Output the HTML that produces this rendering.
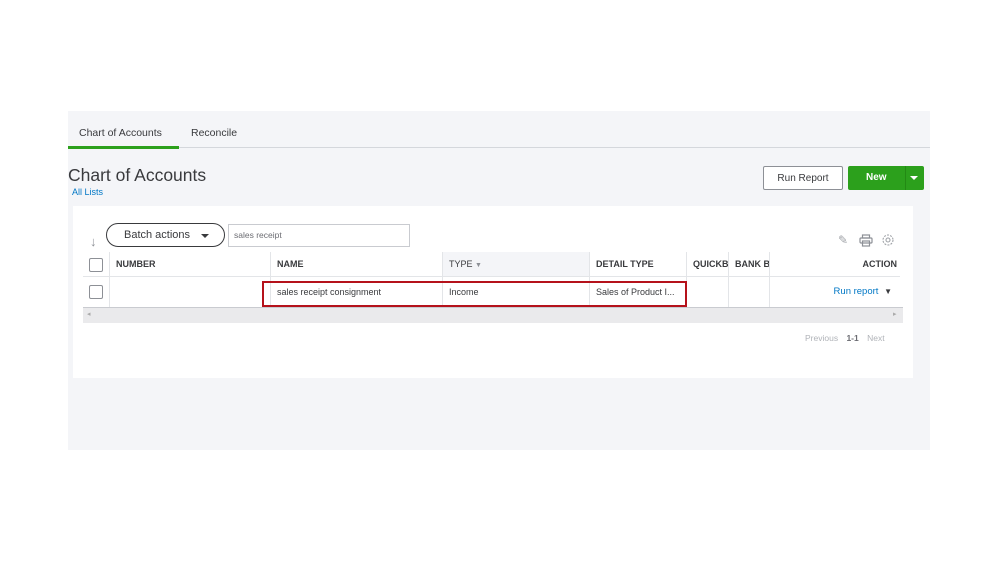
<!DOCTYPE html><html><head><style>
body{margin:0;width:999px;height:562px;background:#fff;position:relative;font-family:"Liberation Sans",sans-serif;overflow:hidden}
.a{position:absolute}
.th{position:absolute;top:252px;height:24px;line-height:24px;font-size:9px;font-weight:bold;color:#393a3d;padding-left:6px;box-sizing:border-box;border-left:1px solid #e3e5e8;white-space:nowrap;overflow:hidden}
.td{position:absolute;top:277px;height:30px;line-height:30px;font-size:9px;color:#393a3d;padding-left:6px;box-sizing:border-box;border-left:1px solid #e3e5e8;white-space:nowrap;overflow:hidden}
.cb{position:absolute;width:12px;height:12px;border:1px solid #8d9096;border-radius:2px;background:#fff}
</style></head><body>
<div class="a" style="left:68px;top:111px;width:862px;height:339px;background:#f4f5f8"></div>
<div class="a" style="left:68px;top:147px;width:862px;height:1px;background:#d4d7dc"></div>
<div class="a" style="left:68px;top:146px;width:111px;height:3px;background:#2ca01c"></div>
<div class="a" style="left:79px;top:127px;font-size:10.5px;color:#393a3d">Chart of Accounts</div>
<div class="a" style="left:191px;top:127px;font-size:10.5px;color:#393a3d">Reconcile</div>
<div class="a" style="left:68px;top:165px;font-size:17.5px;color:#393a3d">Chart of Accounts</div>
<div class="a" style="left:72px;top:187px;font-size:9px;color:#0077c5">All Lists</div>
<div class="a" style="left:763px;top:166px;width:78px;height:22px;border:1px solid #8d9096;border-radius:2px;background:#fff;font-size:10px;text-align:center;line-height:24px;color:#393a3d">Run Report</div>
<div class="a" style="left:848px;top:166px;width:76px;height:24px;background:#2ca01c;border-radius:2px;color:#fff;font-size:10px;font-weight:bold;line-height:24px"><span style="position:absolute;left:18px">New</span><span style="position:absolute;left:57px;top:0;width:1px;height:24px;background:#238a14"></span><span style="position:absolute;left:62px;top:10px;border-left:4px solid transparent;border-right:4px solid transparent;border-top:4px solid #fff"></span></div>
<div class="a" style="left:73px;top:206px;width:840px;height:172px;background:#fff"></div>
<div class="a" style="left:90px;top:234px;font-size:13px;color:#8d9096">↓</div>
<div class="a" style="left:106px;top:223px;width:117px;height:22px;border:1.5px solid #393a3d;border-radius:12px;font-size:11px;line-height:22px;color:#393a3d"><span style="position:absolute;left:17px">Batch actions</span><span style="position:absolute;left:94px;top:10px;border-left:4px solid transparent;border-right:4px solid transparent;border-top:4px solid #393a3d"></span></div>
<div class="a" style="left:228px;top:224px;border:1px solid #c9cbd0;font-size:8.5px;line-height:21px;color:#6b6c72;padding-left:5px;box-sizing:border-box;width:182px;height:23px">sales receipt</div>
<div class="a" style="left:838px;top:233px;font-size:12px;color:#a0a3a8">✎</div>
<svg class="a" style="left:859px;top:234px" width="14" height="13" viewBox="0 0 14 13" fill="none" stroke="#8d9096" stroke-width="1.2"><rect x="3.5" y="1" width="7" height="3"/><rect x="1" y="4" width="12" height="5" rx="1"/><rect x="3.5" y="7" width="7" height="5"/></svg>
<svg class="a" style="left:881px;top:233px" width="14" height="14" viewBox="0 0 14 14" fill="none" stroke="#a0a3a8" stroke-width="1.1"><circle cx="7" cy="7" r="2"/><circle cx="7" cy="7" r="5" stroke-dasharray="2 1.2"/></svg>
<div class="cb" style="left:89px;top:258px"></div>
<div class="th" style="left:109px;width:161px">NUMBER</div>
<div class="th" style="left:270px;width:172px">NAME</div>
<div class="th" style="left:442px;width:147px;background:#f4f5f8;font-weight:normal">TYPE <span style="font-size:7px;color:#8d9096">▼</span></div>
<div class="th" style="left:589px;width:97px">DETAIL TYPE</div>
<div class="th" style="left:686px;width:42px">QUICKBO</div>
<div class="th" style="left:728px;width:41px">BANK BA</div>
<div class="th" style="left:769px;width:131px;text-align:right;padding-right:3px">ACTION</div>
<div class="a" style="left:83px;top:276px;width:817px;height:1px;background:#e3e5e8"></div>
<div class="cb" style="left:89px;top:285px"></div>
<div class="td" style="left:109px;width:161px"></div>
<div class="td" style="left:270px;width:172px">sales receipt consignment</div>
<div class="td" style="left:442px;width:147px">Income</div>
<div class="td" style="left:589px;width:97px">Sales of Product I...</div>
<div class="td" style="left:686px;width:42px"></div>
<div class="td" style="left:728px;width:41px"></div>
<div class="td" style="left:769px;width:131px;text-align:right;padding-right:8px;color:#0077c5;font-size:9.5px">Run report <span style="color:#393a3d;font-size:8px;margin-left:3px">▼</span></div>
<div class="a" style="left:83px;top:307px;width:820px;height:15px;background:#eaeaec;border-top:1px solid #c9cbd0"></div>
<div class="a" style="left:87px;top:310px;font-size:7px;color:#aaa">◂</div>
<div class="a" style="left:893px;top:310px;font-size:7px;color:#aaa">▸</div>
<div class="a" style="left:262px;top:281px;width:421px;height:22px;border:2px solid #b5121b"></div>
<div class="a" style="left:805px;top:333px;font-size:8.5px;color:#b0b3b8">Previous <b style="color:#6b6c72;margin:0 6px">1-1</b> Next</div>
</body></html>
